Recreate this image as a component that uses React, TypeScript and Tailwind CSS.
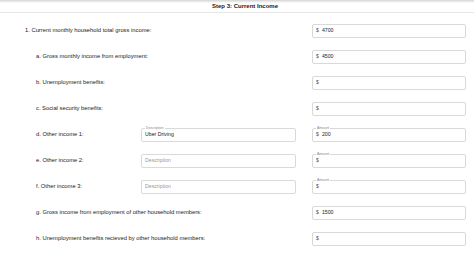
type Row = {
  label: string;
  indent?: boolean;
  value?: string;
  desc?: { value?: string };
  legend?: boolean;
};

const rows: Row[] = [
  { label: "1. Current monthly household total gross income:", value: "4700" },
  { label: "a. Gross monthly income from employment:", indent: true, value: "4500" },
  { label: "b. Unemployment benefits:", indent: true },
  { label: "c. Social security benefits:", indent: true },
  { label: "d. Other income 1:", indent: true, desc: { value: "Uber Driving" }, value: "200", legend: true },
  { label: "e. Other income 2:", indent: true, desc: {}, legend: true },
  { label: "f. Other income 3:", indent: true, desc: {}, legend: true },
  { label: "g. Gross income from employment of other household members:", indent: true, value: "1500" },
  { label: "h. Unemployment benefits recieved by other household members:", indent: true },
];

function Field({
  children,
  legend,
  width,
}: {
  children: React.ReactNode;
  legend?: string;
  width: string;
}) {
  return (
    <div
      className={`relative h-[14px] ${width} rounded-[2px] border border-[#d9d9d9] bg-white flex items-center pl-[3px] text-[5.2px] text-[#222]`}
    >
      {legend && (
        <span className="absolute -top-[3px] left-[3px] bg-white px-[1px] text-[3.5px] leading-[4px] text-[#888]">
          {legend}
        </span>
      )}
      {children}
    </div>
  );
}

export default function App() {
  return (
    <div
      className="w-[474px] h-[254px] bg-white overflow-hidden text-[#1a1a1a]"
      style={{ fontFamily: '"Liberation Sans", Arial, sans-serif' }}
    >
      {/* Header */}
      <div className="relative h-[13px] border-b border-[#e6e6e6] flex items-center justify-center pl-[16px]">
        <div className="absolute top-0 left-0 right-0 h-[3px] bg-gradient-to-b from-[#d4d4d4] to-white" />
        <span className="relative text-[6px] font-bold text-[#1a1a1a]">Step 3: Current Income</span>
      </div>

      <div className="pt-[5px]">
        {rows.map((r) => (
          <div key={r.label} className="h-[26px] flex items-center pr-[8px]">
            <div
              className={`text-[5.8px] leading-none ${r.indent ? "pl-[36px]" : "pl-[25px]"} ${
                r.desc ? "w-[141px]" : "flex-1"
              }`}
            >
              {r.label}
            </div>
            {r.desc && (
              <>
                <Field width="w-[155px]" legend={r.desc.value ? "Description" : undefined}>
                  {r.desc.value ? (
                    <span>{r.desc.value}</span>
                  ) : (
                    <span className="text-[#999]">Description</span>
                  )}
                </Field>
                <div className="flex-1" />
              </>
            )}
            <Field width="w-[154px]" legend={r.legend ? "Amount" : undefined}>
              <span className="text-[#555]">$</span>
              {r.value && <span className="ml-[3px]">{r.value}</span>}
            </Field>
          </div>
        ))}
      </div>
    </div>
  );
}
